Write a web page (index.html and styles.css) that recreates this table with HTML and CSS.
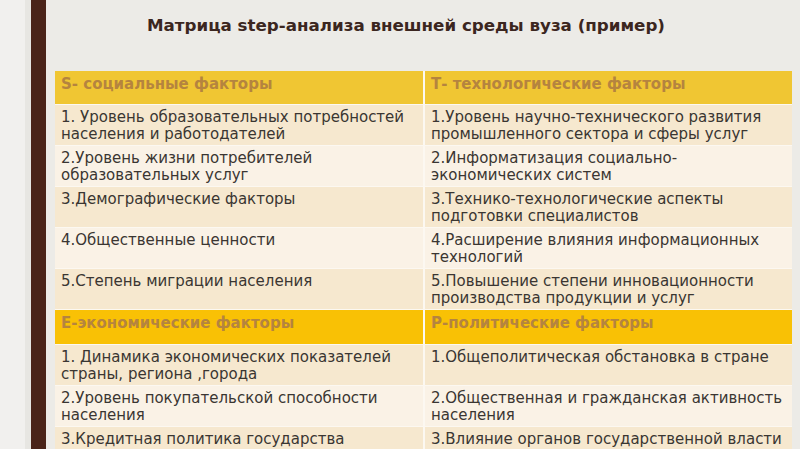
FILE: index.html
```html
<!DOCTYPE html>
<html lang="ru">
<head>
<meta charset="utf-8">
<title>Матрица step-анализа</title>
<link rel="stylesheet" href="styles.css">
</head>
<body>
<div class="page">
  <div class="edge"></div>
  <div class="edge-shade"></div>
  <div class="bar"></div>
  <main class="main">
    <h1 class="title">Матрица step-анализа внешней среды вуза (пример)</h1>
    <div class="matrix">
      <div class="cell head">S- социальные факторы</div>
      <div class="cell head">Т- технологические факторы</div>

      <div class="cell odd">1. Уровень образовательных потребностей населения и работодателей</div>
      <div class="cell odd">1.Уровень научно-технического развития промышленного сектора и сферы услуг</div>

      <div class="cell even">2.Уровень жизни потребителей образовательных услуг</div>
      <div class="cell even">2.Информатизация социально-экономических систем</div>

      <div class="cell odd">3.Демографические факторы</div>
      <div class="cell odd">3.Технико-технологические аспекты подготовки специалистов</div>

      <div class="cell even">4.Общественные ценности</div>
      <div class="cell even">4.Расширение влияния информационных технологий</div>

      <div class="cell odd">5.Степень миграции населения</div>
      <div class="cell odd">5.Повышение степени инновационности производства продукции и услуг</div>

      <div class="cell head head-e">Е-экономические факторы</div>
      <div class="cell head head-e">Р-политические факторы</div>

      <div class="cell odd">1. Динамика экономических показателей страны, региона ,города</div>
      <div class="cell odd">1.Общеполитическая обстановка в стране</div>

      <div class="cell even">2.Уровень покупательской способности населения</div>
      <div class="cell even">2.Общественная и гражданская активность населения</div>

      <div class="cell odd">3.Кредитная политика государства</div>
      <div class="cell odd">3.Влияние органов государственной власти</div>
    </div>
  </main>
</div>
</body>
</html>
```

FILE: styles.css
```css
* { box-sizing: border-box; }

html, body {
  margin: 0;
  padding: 0;
  width: 800px;
  height: 449px;
  overflow: hidden;
  background: #ecebe7;
  font-family: "DejaVu Sans", "Liberation Sans", sans-serif;
}

.page {
  display: flex;
  height: 449px;
}

.edge {
  width: 25px;
  background: #f1f0ee;
}

.edge-shade {
  width: 6px;
  background: #e7e6e2;
}

.bar {
  width: 15px;
  background: #4a2419;
}

.main {
  flex: 1;
  padding: 0 8px 0 9px;
}

.title {
  margin: 0;
  padding: 15px 0 0 92px;
  height: 71px;
  font-size: 16.7px;
  line-height: 21px;
  font-weight: bold;
  color: #3b2620;
  white-space: nowrap;
}

.matrix {
  display: grid;
  grid-template-columns: 368px 367px;
  grid-template-rows: 33px repeat(5, 40px) 34px 40px 40px 40px;
  column-gap: 2px;
  row-gap: 1px;
  background: #fcf8f1;
}

.cell {
  padding: 4px 6px 0 6px;
  font-size: 15px;
  line-height: 16.5px;
  color: #3a3632;
  overflow: hidden;
}

.head {
  background: #f0c633;
  color: #b5843f;
  font-weight: bold;
  font-size: 15px;
  padding-top: 5px;
}

.head-e {
  background: #f9c105;
}

.odd { background: #f6e8cf; }
.even { background: #faf2e6; }
```
